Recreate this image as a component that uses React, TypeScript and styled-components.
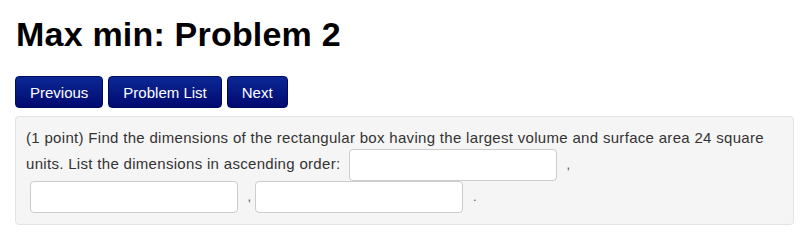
import { FC } from "react";
import styled, { createGlobalStyle } from "styled-components";

const GlobalStyle = createGlobalStyle`
    html, body {
        margin: 0;
        padding: 0;
        background: #ffffff;
    }
    body {
        font-family: "Liberation Sans", Arial, sans-serif;
        color: #333;
    }
`;

const Page = styled.div`
    padding: 0 6px 0 15px;
`;

const Title = styled.h1`
    margin: 0;
    padding: 14px 0 0 1px;
    font-size: 34px;
    line-height: 40px;
    font-weight: bold;
    color: #000;
    letter-spacing: 0.2px;
`;

const Nav = styled.div`
    display: flex;
    gap: 5px;
    margin-top: 22px;
`;

const NavButton = styled.button`
    height: 32px;
    padding: 0 14px;
    border: 1px solid #000a5e;
    border-radius: 4px;
    background: linear-gradient(to bottom, #0c2896, #000a70);
    color: #ffffff;
    font-family: "Liberation Sans", Arial, sans-serif;
    font-size: 15px;
    cursor: pointer;
`;

const Well = styled.div`
    margin-top: 8px;
    padding: 10px 10px 11px 10px;
    background: #f5f5f5;
    border: 1px solid #e3e3e3;
    border-radius: 4px;
    font-size: 15px;
    letter-spacing: 0.31px;
    line-height: 22px;
    color: #333;
`;

const Slot = styled.span`
    white-space: nowrap;
`;

const Answer = styled.input`
    box-sizing: border-box;
    width: 208px;
    height: 32px;
    margin: 0 5px 0 4px;
    padding: 4px 6px;
    border: 1px solid #cccccc;
    border-radius: 4px;
    background: #ffffff;
    vertical-align: middle;
    font-size: 14px;
`;

const Mark = styled.span`
    font-size: 13px;
    color: #555;
`;

const App: FC = () => {
    return (
        <Page>
            <GlobalStyle />
            <Title>Max min: Problem 2</Title>
            <Nav>
                <NavButton>Previous</NavButton>
                <NavButton>Problem List</NavButton>
                <NavButton>Next</NavButton>
            </Nav>
            <Well>
                (1 point) Find the dimensions of the rectangular box having the largest volume and
                surface area 24 square units. List the dimensions in ascending order:{" "}
                <Slot>
                    <Answer type="text" /> <Mark>,</Mark>
                </Slot>{" "}
                <Slot>
                    <Answer type="text" /> <Mark>,</Mark>
                </Slot>
                <Slot>
                    <Answer type="text" /> <Mark>.</Mark>
                </Slot>
            </Well>
        </Page>
    );
};

export default App;
